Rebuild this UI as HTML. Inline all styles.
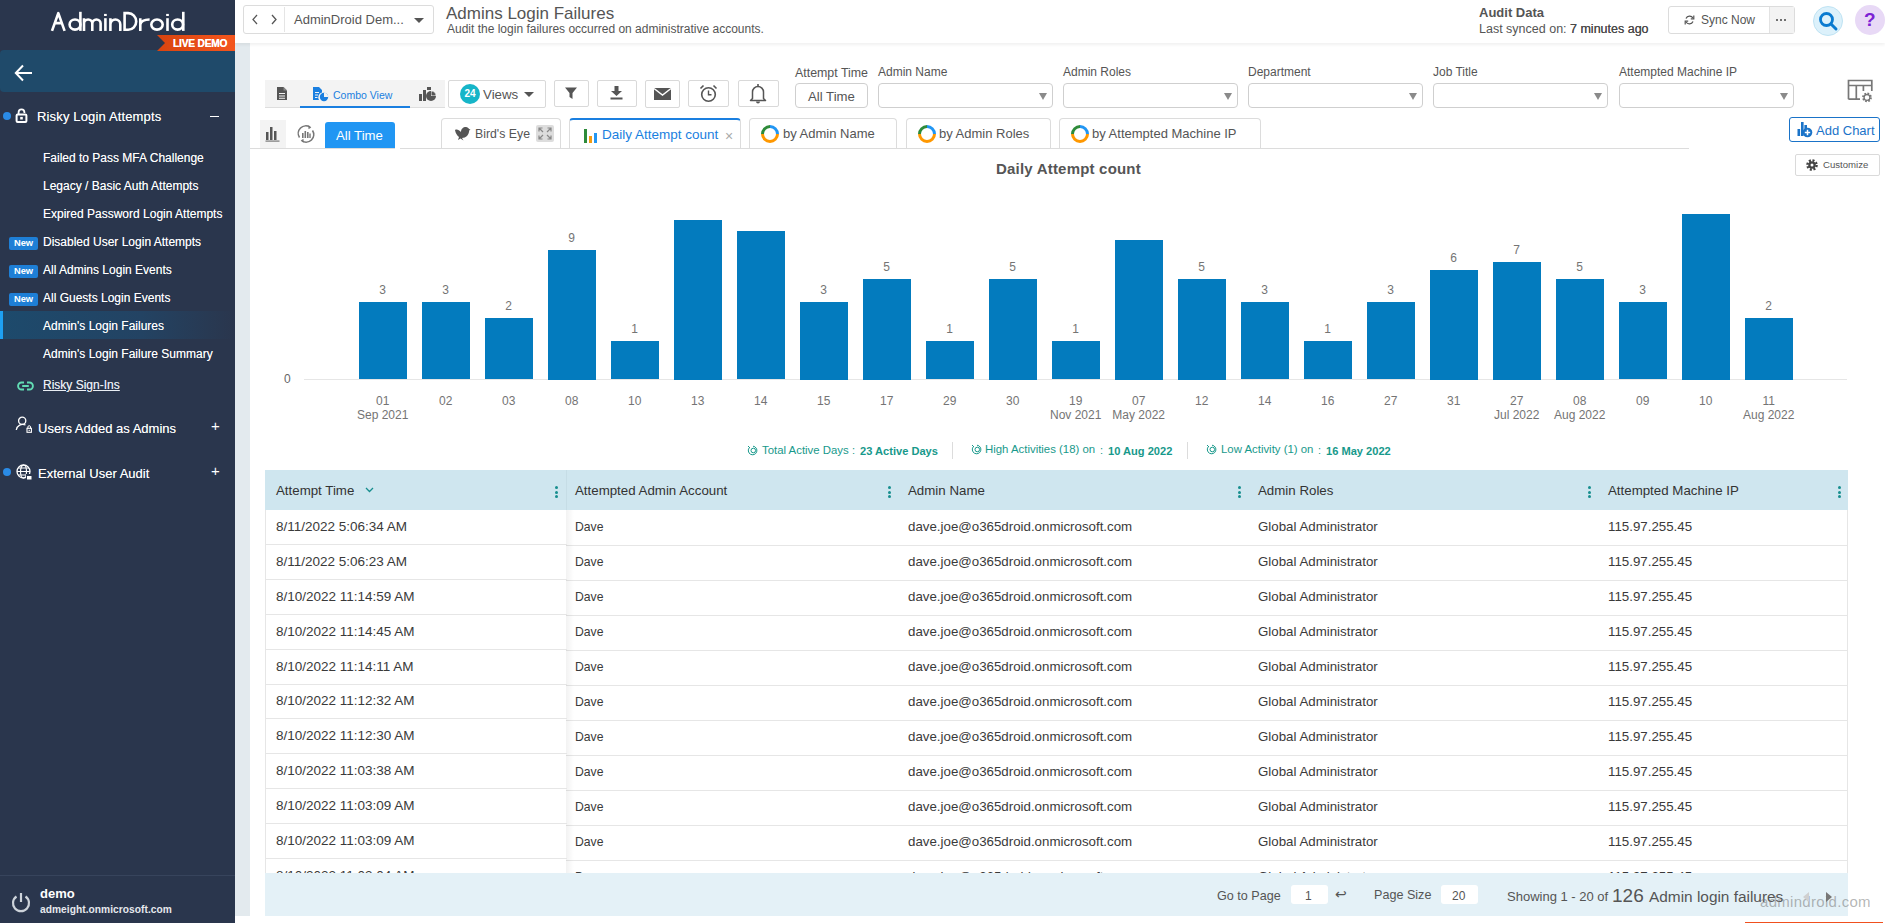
<!DOCTYPE html>
<html><head><meta charset="utf-8">
<style>
*{box-sizing:border-box;margin:0;padding:0}
html,body{width:1885px;height:923px;overflow:hidden;background:#fff;font-family:"Liberation Sans",sans-serif;color:#333}
.a{position:absolute}
.nw{white-space:nowrap}
#sb{left:0;top:0;width:235px;height:923px;background:#2a364d}
.si{position:absolute;left:43px;font-size:12px;color:#fff;white-space:nowrap;margin-top:1px;text-shadow:0 0 0.3px rgba(255,255,255,0.6)}
.new{position:absolute;left:9px;width:29px;height:13px;background:#1e7fd6;border-radius:2px;color:#fff;font-size:9.3px;font-weight:700;text-align:center;line-height:13px}
.hdr{left:235px;top:0;width:1650px;height:43px;background:#fff}
.btn{position:absolute;border:1px solid #d9d9d9;border-radius:2px;background:#fff}
.sel{position:absolute;top:83px;width:175px;height:25px;border:1px solid #cfcfcf;border-radius:4px;background:#fff}
.sel:after{content:"";position:absolute;right:5px;top:9px;border-left:4px solid transparent;border-right:4px solid transparent;border-top:7px solid #8a8a8a}
.lbl{position:absolute;top:65px;font-size:12px;color:#555;white-space:nowrap}
.tab{position:absolute;top:118px;height:30px;border:1px solid #dcdcdc;border-bottom:none;border-radius:4px 4px 0 0;background:#fff;font-size:13px;color:#555;white-space:nowrap}
.bar{position:absolute;background:#037bbe;width:47.5px}
.bv{position:absolute;font-size:12px;color:#747474;width:40px;text-align:center}
.xl{position:absolute;font-size:12px;color:#747474;width:80px;text-align:center;top:394px;line-height:14px}
.th{position:absolute;top:470px;height:40px;background:#cfe6ef}
.tht{position:absolute;top:483px;font-size:13.3px;color:#333;white-space:nowrap}
.kb{position:absolute;top:486px;width:3px;height:13px}
.kb i{position:absolute;left:0;width:3px;height:3px;border-radius:50%;background:#178e8e}
.rl{position:absolute;height:1px;background:#e6e6e6}
.td{position:absolute;font-size:13.3px;color:#3a3a3a;white-space:nowrap}
</style></head><body>

<!-- SIDEBAR -->
<div id="sb" class="a">
  <svg class="a" style="left:0;top:0" width="235" height="40" viewBox="0 0 235 40"><g stroke="#fff" stroke-width="2.6" fill="none">
<path d="M52 30.9 L58.3 13.2 L64.6 30.9 M54.6 23.1 H62" stroke-linejoin="round"/>
<ellipse cx="75" cy="24.55" rx="5.4" ry="5.1"/><path d="M80.4 11.8 V30.9"/>
<path d="M84 30.9 V23.6 A4.15 4.15 0 0 1 92.3 23.6 V30.9 M92.3 23.6 A4.15 4.15 0 0 1 100.6 23.6 V30.9 M84 18.2 V24"/>
<path d="M105.4 18.2 V30.9"/>
<path d="M110.4 30.9 V24.4 A4.95 4.95 0 0 1 120.3 24.4 V30.9 M110.4 18.2 V25"/>
<path d="M124.6 13.1 V29.8 H128.2 A8 8.35 0 0 0 128.2 13.1 Z"/>
<path d="M140.3 18.2 V30.9 M140.3 24.5 Q141.3 19.5 149.6 19.5"/>
<ellipse cx="157" cy="24.55" rx="5.7" ry="5.1"/>
<path d="M167.5 18.2 V30.9"/>
<ellipse cx="177.6" cy="24.55" rx="5.4" ry="5.1"/><path d="M183.3 11.8 V30.9"/>
</g><rect x="104.05" y="13.9" width="2.7" height="2.1" fill="#fff"/><rect x="166.15" y="13.9" width="2.7" height="2.1" fill="#fff"/></svg>
    <div class="a" style="left:0;top:50px;width:235px;height:42px;background:#1f4a6a;border-radius:4px 0 0 4px"></div>
  <div class="a" style="left:157px;top:35px;width:78px;height:16px;background:linear-gradient(90deg,#d9440f,#f4561e);clip-path:polygon(0 0,100% 0,100% 100%,0 100%,8px 50%)"></div>
  <div class="a nw" style="left:173px;top:37.5px;font-size:10.2px;font-weight:700;color:#fff;letter-spacing:-0.2px;text-shadow:0 0 0.4px #fff">LIVE DEMO</div>
  <svg class="a" style="left:14px;top:64px" width="19" height="18" viewBox="0 0 19 18"><path d="M9 1.5 L1.8 9 L9 16.5 M2 9 H18" stroke="#fff" stroke-width="2" fill="none"/></svg>

  <div class="a" style="left:3px;top:112px;width:8px;height:8px;border-radius:50%;background:#2a8be6"></div>
  <svg class="a" style="left:15px;top:108px" width="13" height="15" viewBox="0 0 13 15"><path d="M3.6 6.5 V4.2 A2.9 2.9 0 0 1 9.4 4.2 V5" stroke="#fff" stroke-width="1.8" fill="none"/><rect x="1.6" y="6.6" width="9.8" height="7.4" rx="1" stroke="#fff" stroke-width="2" fill="none"/><rect x="5.2" y="8.9" width="2.6" height="2.6" fill="#fff"/></svg>
  <div class="si" style="left:37px;top:108px;font-size:13px;font-weight:400;letter-spacing:0.15px">Risky Login Attempts</div>
  <div class="a" style="left:210px;top:116px;width:9px;height:1px;background:#fff"></div>

  <div class="si" style="top:150px">Failed to Pass MFA Challenge</div>
  <div class="si" style="top:178px">Legacy / Basic Auth Attempts</div>
  <div class="si" style="top:206px">Expired Password Login Attempts</div>
  <div class="new" style="top:237px">New</div>
  <div class="si" style="top:234px">Disabled User Login Attempts</div>
  <div class="new" style="top:265px">New</div>
  <div class="si" style="top:262px">All Admins Login Events</div>
  <div class="new" style="top:293px">New</div>
  <div class="si" style="top:290px">All Guests Login Events</div>
  <div class="a" style="left:0;top:311px;width:235px;height:28px;background:linear-gradient(90deg,#1d4a6c 0%,#234363 60%,#2a364d 100%)"></div>
  <div class="a" style="left:0;top:311px;width:3px;height:28px;background:#1ea0f2"></div>
  <div class="si" style="top:318px">Admin's Login Failures</div>
  <div class="si" style="top:346px">Admin's Login Failure Summary</div>
  <svg class="a" style="left:17px;top:381px" width="17" height="10" viewBox="0 0 17 10"><g stroke="#62dcb4" stroke-width="1.9" fill="none"><path d="M7 1.5 H4.6 A3.5 3.5 0 0 0 4.6 8.5 H7 M10 1.5 H12.4 A3.5 3.5 0 0 1 12.4 8.5 H10 M5.2 5 H11.8"/></g></svg>
  <div class="si" style="top:377px;text-decoration:underline;color:#e9eef4">Risky Sign-Ins</div>

  <svg class="a" style="left:15px;top:416px" width="18" height="18" viewBox="0 0 18 18"><circle cx="7.2" cy="4.8" r="3.6" stroke="#fff" stroke-width="1.3" fill="none"/><path d="M1.3 14 A6.5 6.5 0 0 1 10.5 9" stroke="#fff" stroke-width="1.3" fill="none"/><rect x="12" y="12.3" width="4.4" height="4" stroke="#fff" stroke-width="1.1" fill="none"/><path d="M12.9 12.3 V11 A1.3 1.3 0 0 1 15.5 11 V12.3" stroke="#fff" stroke-width="1" fill="none"/><rect x="13.6" y="13.8" width="1.2" height="1.2" fill="#fff"/></svg>
  <div class="si" style="left:38px;top:420px;font-size:13px">Users Added as Admins</div>
  <div class="a nw" style="left:211px;top:417px;font-size:15px;color:#fff">+</div>

  <div class="a" style="left:3px;top:468px;width:8px;height:8px;border-radius:50%;background:#2a8be6"></div>
  <svg class="a" style="left:16px;top:464px" width="16" height="16" viewBox="0 0 16 16"><circle cx="7.5" cy="7.5" r="6.5" stroke="#fff" stroke-width="1.3" fill="none"/><ellipse cx="7.5" cy="7.5" rx="3" ry="6.5" stroke="#fff" stroke-width="1.2" fill="none"/><path d="M1 7.5 H14 M2 4 H13 M2 11 H13" stroke="#fff" stroke-width="1.1"/><rect x="10" y="10" width="6" height="6" fill="#2a364d"/><rect x="11" y="12" width="4.5" height="3.5" fill="#fff"/></svg>
  <div class="si" style="left:38px;top:465px;font-size:13px">External User Audit</div>
  <div class="a nw" style="left:211px;top:462px;font-size:15px;color:#fff">+</div>

  <div class="a" style="left:0;top:875px;width:235px;height:1px;background:#37445c"></div>
  <svg class="a" style="left:10px;top:892px" width="22" height="21" viewBox="0 0 22 21"><path d="M6.5 4.5 A8 8 0 1 0 15.5 4.5" stroke="#cdd3da" stroke-width="2.2" fill="none"/><path d="M11 1 V10" stroke="#cdd3da" stroke-width="2.2"/></svg>
  <div class="a nw" style="left:40px;top:886px;font-size:13px;font-weight:700;color:#fff">demo</div>
  <div class="a nw" style="left:40px;top:903.5px;font-size:10.2px;font-weight:700;color:#e6e9ee;letter-spacing:0.05px">admeight.onmicrosoft.com</div>
</div>

<!-- MAIN BG -->
<div class="a" style="left:235px;top:43px;width:15px;height:873px;background:#e3eaee"></div>

<!-- HEADER -->
<div class="a hdr" style="box-shadow:0 2px 3px rgba(0,0,0,0.06)"></div>

<!-- HEADER CONTENT -->
<div class="btn" style="left:243px;top:5px;width:191px;height:29px;border-color:#dcdcdc;border-radius:3px"></div>
<div class="a" style="left:284px;top:7px;width:1px;height:25px;background:#e5e5e5"></div>
<svg class="a" style="left:251px;top:14px" width="8" height="11" viewBox="0 0 8 11"><path d="M6 1 L2 5.5 L6 10" stroke="#555" stroke-width="1.3" fill="none"/></svg>
<svg class="a" style="left:270px;top:14px" width="8" height="11" viewBox="0 0 8 11"><path d="M2 1 L6 5.5 L2 10" stroke="#555" stroke-width="1.3" fill="none"/></svg>
<div class="a nw" style="left:294px;top:12px;font-size:13px;color:#555">AdminDroid Dem...</div>
<div class="a" style="left:414px;top:18px;border-left:5px solid transparent;border-right:5px solid transparent;border-top:5px solid #555"></div>
<div class="a nw" style="left:446px;top:3.5px;font-size:17px;color:#555">Admins Login Failures</div>
<div class="a nw" style="left:447px;top:22px;font-size:12px;color:#555">Audit the login failures occurred on administrative accounts.</div>

<div class="a nw" style="left:1479px;top:5px;font-size:13px;font-weight:700;color:#555">Audit Data</div>
<div class="a nw" style="left:1479px;top:21.5px;font-size:12.5px;color:#555">Last synced on: <span style="color:#4a4a4a;text-shadow:0 0 0.5px #555">7 minutes ago</span></div>
<div class="btn" style="left:1668px;top:6px;width:127px;height:28px;border-color:#dcdcdc;border-radius:3px"></div>
<div class="a" style="left:1769px;top:7px;width:25px;height:26px;background:#f3f3f3;border-left:1px solid #e2e2e2"></div>
<div class="a" style="left:1776px;top:19px;width:2.2px;height:2.2px;background:#444;border-radius:50%;box-shadow:4px 0 0 #444,8px 0 0 #444"></div>
<svg class="a" style="left:1684px;top:14px" width="11" height="12" viewBox="0 0 11 12"><path d="M2 4.5 A4 4 0 0 1 9 4 M9 7.5 A4 4 0 0 1 2 8" stroke="#555" stroke-width="1.3" fill="none"/><path d="M9.8 1.5 V4.8 H6.8" stroke="#555" stroke-width="1.2" fill="none"/><path d="M1.2 10.5 V7.2 H4.2" stroke="#555" stroke-width="1.2" fill="none"/></svg>
<div class="a nw" style="left:1701px;top:13px;font-size:12px;color:#555">Sync Now</div>
<div class="a" style="left:1813px;top:6px;width:30px;height:30px;border-radius:50%;background:#dcf1fb;border:1px solid #bfe3f3"></div>
<svg class="a" style="left:1817px;top:10px" width="22" height="22" viewBox="0 0 22 22"><circle cx="9.5" cy="9.5" r="6" stroke="#0a7bd0" stroke-width="2.8" fill="none"/><path d="M14 14 L19 19" stroke="#0a7bd0" stroke-width="3" stroke-linecap="round"/></svg>
<div class="a" style="left:1855px;top:5px;width:30px;height:30px;border-radius:50%;background:#e8d9f6"></div>
<div class="a nw" style="left:1864px;top:9px;font-size:19px;font-weight:700;color:#7c22d4">?</div>


<!-- TOOLBAR -->
<div class="a" style="left:265px;top:80px;width:180px;height:28px;background:#f3f3f3;border-bottom:1px solid #dedede"></div>
<div class="a" style="left:300px;top:106px;width:110px;height:2px;background:#1a7fe0"></div>
<svg class="a" style="left:276px;top:86px" width="12" height="15" viewBox="0 0 12 15"><path d="M1 1 H7.5 L11 4.5 V14 H1 Z" fill="#555"/><path d="M7.5 1 V4.5 H11" fill="#888"/><path d="M3 7.5 H9 M3 10 H9 M3 12.3 H9" stroke="#f3f3f3" stroke-width="1.1"/></svg>
<svg class="a" style="left:312px;top:86px" width="17" height="16" viewBox="0 0 17 16"><path d="M1 1 H7 L10 4 V6.5 A5 5 0 0 0 7 14 H1 Z" fill="#1a7fe0"/><path d="M3 6.5 H7 M3 9 H6 M3 11.5 H5.5" stroke="#f3f3f3" stroke-width="1"/><circle cx="12" cy="11" r="4.2" fill="#1a7fe0"/><path d="M12 11 V6.8 A4.2 4.2 0 0 1 16.2 11 Z" fill="#f3f3f3"/></svg>
<div class="a nw" style="left:333px;top:89px;font-size:10.5px;color:#1a7fe0">Combo View</div>
<svg class="a" style="left:418px;top:86px" width="19" height="16" viewBox="0 0 19 16"><rect x="1" y="8" width="3" height="7" fill="#555"/><rect x="5" y="4" width="3" height="11" fill="#555"/><circle cx="13" cy="10" r="5" fill="#555"/><path d="M13 10 V5 A5 5 0 0 1 18 10 Z" fill="#f3f3f3"/><path d="M13.5 9.5 V5.5 A4.3 4.3 0 0 1 17.5 9.5 Z" fill="#555"/><rect x="9" y="1" width="4" height="3" fill="#555"/></svg>

<div class="btn" style="left:448px;top:80px;width:98px;height:28px"></div>
<div class="a" style="left:460px;top:84px;width:20px;height:20px;border-radius:50%;background:#16b5c8;color:#fff;font-size:10px;font-weight:700;text-align:center;line-height:20px">24</div>
<div class="a nw" style="left:483px;top:87px;font-size:13.3px;color:#555">Views</div>
<div class="a" style="left:524px;top:92px;border-left:5px solid transparent;border-right:5px solid transparent;border-top:5px solid #555"></div>

<div class="btn" style="left:554px;top:80px;width:35px;height:27px"></div>
<svg class="a" style="left:564px;top:86px" width="14" height="14" viewBox="0 0 14 14"><path d="M1 1.5 H13 L8.5 7 V13 L5.5 11 V7 Z" fill="#555"/></svg>
<div class="btn" style="left:597px;top:80px;width:40px;height:27px"></div>
<svg class="a" style="left:609px;top:85px" width="15" height="15" viewBox="0 0 15 15"><path d="M5.5 1 H9.5 V6 H13 L7.5 11 L2 6 H5.5 Z" fill="#555"/><rect x="1.5" y="12.5" width="12" height="2" fill="#555"/></svg>
<div class="btn" style="left:645px;top:80px;width:35px;height:28px"></div>
<svg class="a" style="left:653px;top:87px" width="19" height="14" viewBox="0 0 19 14"><path d="M1 1 H18 V13 H1 Z" fill="#555"/><path d="M1 1.5 L9.5 8 L18 1.5" stroke="#fff" stroke-width="1.4" fill="none"/></svg>
<div class="btn" style="left:688px;top:80px;width:41px;height:27px"></div>
<svg class="a" style="left:699px;top:84px" width="19" height="19" viewBox="0 0 19 19"><circle cx="9.5" cy="10.5" r="6.8" stroke="#555" stroke-width="1.6" fill="none"/><path d="M9.5 6.5 V10.8 H12.5" stroke="#555" stroke-width="1.4" fill="none"/><path d="M1.5 4.5 L4.5 1.5 M17.5 4.5 L14.5 1.5" stroke="#555" stroke-width="1.6"/></svg>
<div class="btn" style="left:738px;top:80px;width:41px;height:27px"></div>
<svg class="a" style="left:748px;top:83px" width="20" height="21" viewBox="0 0 20 21"><path d="M10 2 A1 1 0 0 1 10 2 M4.5 15.5 V9 A5.5 5.5 0 0 1 15.5 9 V15.5 L17.5 17.5 H2.5 Z" stroke="#555" stroke-width="1.5" fill="none" stroke-linejoin="round"/><path d="M10 1 V3" stroke="#555" stroke-width="1.6"/><path d="M8 18.5 A2 2 0 0 0 12 18.5" fill="#555"/></svg>

<!-- FILTERS -->
<div class="lbl" style="left:795px;top:66px;font-size:12.4px">Attempt Time</div>
<div class="a" style="left:795px;top:83px;width:73px;height:25px;border:1px solid #cfcfcf;border-radius:4px;background:#fff"></div>
<div class="a nw" style="left:808px;top:89px;font-size:13.2px;color:#555">All Time</div>
<div class="lbl" style="left:878px">Admin Name</div><div class="sel" style="left:878px"></div>
<div class="lbl" style="left:1063px">Admin Roles</div><div class="sel" style="left:1063px"></div>
<div class="lbl" style="left:1248px">Department</div><div class="sel" style="left:1248px"></div>
<div class="lbl" style="left:1433px">Job Title</div><div class="sel" style="left:1433px"></div>
<div class="lbl" style="left:1619px">Attempted Machine IP</div><div class="sel" style="left:1619px"></div>
<svg class="a" style="left:1846px;top:78px" width="30" height="28" viewBox="0 0 30 28"><g stroke="#777" stroke-width="1.7" fill="none"><path d="M2.5 21.2 V2.5 H25.8 V13 M2.5 7.5 H25.8 M10.3 7.5 V21.2 M17.4 7.5 V13 M2.5 21.2 H14"/></g><circle cx="21" cy="19.4" r="6" fill="#fff"/><circle cx="21" cy="19.4" r="3.7" stroke="#777" stroke-width="2.4" fill="none" stroke-dasharray="1.6 1.3"/><circle cx="21" cy="19.4" r="2.9" stroke="#777" stroke-width="1.3" fill="none"/></svg>

<!-- TABS ROW -->
<div class="a" style="left:260px;top:120px;width:26px;height:28px;background:#f3f3f3"></div>
<svg class="a" style="left:265px;top:125px" width="15" height="17" viewBox="0 0 15 17"><rect x="1" y="7" width="2.5" height="8" fill="#555"/><rect x="5" y="2" width="2.5" height="13" fill="#555"/><rect x="9" y="6" width="2.5" height="9" fill="#555"/><rect x="0.5" y="15.5" width="14" height="1.2" fill="#777"/></svg>
<svg class="a" style="left:296px;top:124px" width="20" height="20" viewBox="0 0 20 20"><path d="M3.5 13.5 A7.5 7.5 0 0 1 14 3.2 M16.5 6.5 A7.5 7.5 0 0 1 6 16.8" stroke="#777" stroke-width="1.6" fill="none"/><path d="M12.5 1.2 L15.3 3.4 L12.5 5.2 Z M7.5 18.8 L4.7 16.6 L7.5 14.8 Z" fill="#777"/><rect x="6" y="9" width="1.6" height="5" fill="#777"/><rect x="8.5" y="7" width="1.6" height="7" fill="#777"/><rect x="11" y="8" width="1.6" height="6" fill="#777"/><rect x="13.3" y="9.5" width="1.4" height="4.5" fill="#777"/></svg>
<div class="a" style="left:325px;top:122px;width:70px;height:26px;background:#2196f3;border-radius:3px 3px 0 0"></div>
<div class="a nw" style="left:336px;top:128px;font-size:13.2px;color:#fff">All Time</div>
<div class="a" style="left:250px;top:148px;width:1439px;height:1px;background:#dcdcdc"></div>
<div class="a" style="left:395px;top:148px;width:5px;height:1px;background:#fff"></div>

<div class="tab" style="left:441px;width:120px"></div>
<svg class="a" style="left:454px;top:126px" width="17" height="15" viewBox="0 0 17 15"><path d="M1 4 C3 3 5 4 7 6 C7 3 9 1 12 1 C13.5 1 14.5 2 15 3 L16.5 3.5 L15.2 4.5 C15 9 12 12 8 12 L9.5 14.5 L6.5 12.5 L4 14 L5 11 C3 9.5 1.5 7 1 4 Z" fill="#555"/></svg>
<div class="a nw" style="left:475px;top:127px;font-size:12.3px;color:#555">Bird's Eye</div>
<div class="a" style="left:536px;top:125px;width:18px;height:17px;background:#ddd;border-radius:2px"></div>
<svg class="a" style="left:538px;top:127px" width="14" height="13" viewBox="0 0 14 13"><path d="M1 4.5 V1 H4.5 M9.5 1 H13 V4.5 M13 8.5 V12 H9.5 M4.5 12 H1 V8.5 M1.5 1.5 L5 5 M12.5 1.5 L9 5 M12.5 11.5 L9 8 M1.5 11.5 L5 8" stroke="#888" stroke-width="1.2" fill="none"/></svg>

<div class="tab" style="left:569px;width:172px;height:30px;top:118px;border-top:2px solid #1a7fe0"></div>
<svg class="a" style="left:584px;top:129px" width="13" height="14" viewBox="0 0 13 14"><rect x="0" y="0" width="3" height="14" fill="#2e8b3a"/><rect x="5" y="7" width="3" height="7" fill="#f39c12"/><rect x="10" y="4" width="3" height="10" fill="#2196f3"/></svg>
<div class="a nw" style="left:602px;top:127px;font-size:13.5px;color:#1a7fe0">Daily Attempt count</div>
<div class="a nw" style="left:725px;top:128px;font-size:14px;color:#aaa">×</div>

<div class="tab" style="left:749px;width:148px"></div>
<div class="tab" style="left:906px;width:145px"></div>
<div class="tab" style="left:1059px;width:202px"></div>
<svg class="a" style="left:761px;top:125px" width="18" height="18" viewBox="0 0 18 18"><path d="M9 1.5 A7.5 7.5 0 0 1 16.5 9" stroke="#2196f3" stroke-width="3" fill="none"/><path d="M16.5 9 A7.5 7.5 0 0 1 1.5 9" stroke="#ff9800" stroke-width="3" fill="none"/><path d="M1.5 9 A7.5 7.5 0 0 1 9 1.5" stroke="#2e8b3a" stroke-width="3" fill="none"/></svg><div class="a nw" style="left:783px;top:126px;font-size:13px;color:#555">by Admin Name</div>
<svg class="a" style="left:918px;top:125px" width="18" height="18" viewBox="0 0 18 18"><path d="M9 1.5 A7.5 7.5 0 0 1 16.5 9" stroke="#2196f3" stroke-width="3" fill="none"/><path d="M16.5 9 A7.5 7.5 0 0 1 1.5 9" stroke="#ff9800" stroke-width="3" fill="none"/><path d="M1.5 9 A7.5 7.5 0 0 1 9 1.5" stroke="#2e8b3a" stroke-width="3" fill="none"/></svg><div class="a nw" style="left:939px;top:126px;font-size:13px;color:#555">by Admin Roles</div>
<svg class="a" style="left:1071px;top:125px" width="18" height="18" viewBox="0 0 18 18"><path d="M9 1.5 A7.5 7.5 0 0 1 16.5 9" stroke="#2196f3" stroke-width="3" fill="none"/><path d="M16.5 9 A7.5 7.5 0 0 1 1.5 9" stroke="#ff9800" stroke-width="3" fill="none"/><path d="M1.5 9 A7.5 7.5 0 0 1 9 1.5" stroke="#2e8b3a" stroke-width="3" fill="none"/></svg><div class="a nw" style="left:1092px;top:126px;font-size:13px;color:#555">by Attempted Machine IP</div>

<div class="a" style="left:1789px;top:117px;width:91px;height:25px;border:1px solid #1a73c8;border-radius:3px;background:#fff"></div>
<svg class="a" style="left:1796px;top:121px" width="17" height="17" viewBox="0 0 17 17"><rect x="1.5" y="8" width="2.6" height="7" fill="#1a73c8"/><rect x="5" y="1" width="2.6" height="14" fill="#1a73c8"/><rect x="8.4" y="4" width="2.6" height="6" fill="#1a73c8"/><circle cx="11.5" cy="11.5" r="4.8" fill="#1a73c8"/><path d="M11.5 8.8 V14.2 M8.8 11.5 H14.2" stroke="#fff" stroke-width="1.5"/></svg>
<div class="a nw" style="left:1816px;top:123px;font-size:13px;color:#1a73c8">Add Chart</div>
<div class="a" style="left:1795px;top:154px;width:85px;height:22px;border:1px solid #dadada;border-radius:2px;background:#fff"></div>
<svg class="a" style="left:1806px;top:159px" width="12" height="12" viewBox="0 0 12 12"><circle cx="6" cy="6" r="4.6" stroke="#444" stroke-width="2.4" fill="none" stroke-dasharray="2 1.6"/><circle cx="6" cy="6" r="3.8" fill="#444"/><circle cx="6" cy="6" r="1.5" fill="#fff"/></svg>
<div class="a nw" style="left:1823px;top:159px;font-size:9.6px;color:#555">Customize</div>


<!-- CHART -->
<div class="a nw" style="left:996px;top:160px;font-size:15px;font-weight:700;color:#555;letter-spacing:0.2px">Daily Attempt count</div>
<div class="a" style="left:304px;top:379px;width:1543px;height:1px;background:#e6e6e6"></div>
<div class="a nw" style="left:284px;top:372px;font-size:12px;color:#666">0</div>
<div class="bar" style="left:359.2px;top:301.7px;height:77.8px"></div><div class="bv" style="left:362.7px;top:282.7px">3</div><div class="xl" style="left:342.7px">01<br>Sep 2021</div>
<div class="bar" style="left:422.2px;top:301.7px;height:77.8px"></div><div class="bv" style="left:425.7px;top:282.7px">3</div><div class="xl" style="left:405.7px">02</div>
<div class="bar" style="left:485.2px;top:317.7px;height:61.8px"></div><div class="bv" style="left:488.7px;top:298.7px">2</div><div class="xl" style="left:468.7px">03</div>
<div class="bar" style="left:548.2px;top:250px;height:129.5px"></div><div class="bv" style="left:551.7px;top:231.0px">9</div><div class="xl" style="left:531.7px">08</div>
<div class="bar" style="left:611.2px;top:340.6px;height:38.9px"></div><div class="bv" style="left:614.7px;top:321.6px">1</div><div class="xl" style="left:594.7px">10</div>
<div class="bar" style="left:674.2px;top:220px;height:159.5px"></div><div class="xl" style="left:657.7px">13</div>
<div class="bar" style="left:737.2px;top:231.1px;height:148.4px"></div><div class="xl" style="left:720.7px">14</div>
<div class="bar" style="left:800.2px;top:301.5px;height:78.0px"></div><div class="bv" style="left:803.7px;top:282.5px">3</div><div class="xl" style="left:783.7px">15</div>
<div class="bar" style="left:863.2px;top:279px;height:100.5px"></div><div class="bv" style="left:866.7px;top:260.0px">5</div><div class="xl" style="left:846.7px">17</div>
<div class="bar" style="left:926.2px;top:340.6px;height:38.9px"></div><div class="bv" style="left:929.7px;top:321.6px">1</div><div class="xl" style="left:909.7px">29</div>
<div class="bar" style="left:989.2px;top:279px;height:100.5px"></div><div class="bv" style="left:992.7px;top:260.0px">5</div><div class="xl" style="left:972.7px">30</div>
<div class="bar" style="left:1052.2px;top:340.6px;height:38.9px"></div><div class="bv" style="left:1055.7px;top:321.6px">1</div><div class="xl" style="left:1035.7px">19<br>Nov 2021</div>
<div class="bar" style="left:1115.2px;top:240px;height:139.5px"></div><div class="xl" style="left:1098.7px">07<br>May 2022</div>
<div class="bar" style="left:1178.2px;top:279px;height:100.5px"></div><div class="bv" style="left:1181.7px;top:260.0px">5</div><div class="xl" style="left:1161.7px">12</div>
<div class="bar" style="left:1241.2px;top:301.7px;height:77.8px"></div><div class="bv" style="left:1244.7px;top:282.7px">3</div><div class="xl" style="left:1224.7px">14</div>
<div class="bar" style="left:1304.2px;top:340.6px;height:38.9px"></div><div class="bv" style="left:1307.7px;top:321.6px">1</div><div class="xl" style="left:1287.7px">16</div>
<div class="bar" style="left:1367.2px;top:301.7px;height:77.8px"></div><div class="bv" style="left:1370.7px;top:282.7px">3</div><div class="xl" style="left:1350.7px">27</div>
<div class="bar" style="left:1430.2px;top:270px;height:109.5px"></div><div class="bv" style="left:1433.7px;top:251.0px">6</div><div class="xl" style="left:1413.7px">31</div>
<div class="bar" style="left:1493.2px;top:262px;height:117.5px"></div><div class="bv" style="left:1496.7px;top:243.0px">7</div><div class="xl" style="left:1476.7px">27<br>Jul 2022</div>
<div class="bar" style="left:1556.2px;top:279px;height:100.5px"></div><div class="bv" style="left:1559.7px;top:260.0px">5</div><div class="xl" style="left:1539.7px">08<br>Aug 2022</div>
<div class="bar" style="left:1619.2px;top:301.7px;height:77.8px"></div><div class="bv" style="left:1622.7px;top:282.7px">3</div><div class="xl" style="left:1602.7px">09</div>
<div class="bar" style="left:1682.2px;top:214px;height:165.5px"></div><div class="xl" style="left:1665.7px">10</div>
<div class="bar" style="left:1745.2px;top:318px;height:61.5px"></div><div class="bv" style="left:1748.7px;top:299.0px">2</div><div class="xl" style="left:1728.7px">11<br>Aug 2022</div>

<svg class="a" style="left:747px;top:445px" width="12" height="11" viewBox="0 0 12 11"><path d="M2.5 2.5 A4.3 4.3 0 1 0 6 1.2" stroke="#17998b" stroke-width="1" fill="none"/><circle cx="6.3" cy="5.5" r="2.3" stroke="#17998b" stroke-width="1" fill="none"/><path d="M1 1 L3 3" stroke="#17998b" stroke-width="1"/></svg>
<div class="a nw" style="left:762px;top:444px;font-size:11.4px;color:#17998b">Total Active Days</div>
<div class="a nw" style="left:852px;top:444px;font-size:11px;color:#17998b">:</div>
<div class="a nw" style="left:860px;top:445px;font-size:11.1px;font-weight:700;color:#17998b">23 Active Days</div>
<div class="a" style="left:952px;top:442px;width:1px;height:17px;background:#dcdcdc"></div>
<svg class="a" style="left:971px;top:444px" width="12" height="11" viewBox="0 0 12 11"><path d="M2.5 2.5 A4.3 4.3 0 1 0 6 1.2" stroke="#17998b" stroke-width="1" fill="none"/><circle cx="6.3" cy="5.5" r="2.3" stroke="#17998b" stroke-width="1" fill="none"/><path d="M1 1 L3 3" stroke="#17998b" stroke-width="1"/></svg>
<div class="a nw" style="left:985px;top:443px;font-size:11.4px;color:#17998b">High Activities (18) on</div>
<div class="a nw" style="left:1100px;top:444px;font-size:11px;color:#17998b">:</div>
<div class="a nw" style="left:1108px;top:445px;font-size:11.1px;font-weight:700;color:#17998b">10 Aug 2022</div>
<div class="a" style="left:1187px;top:442px;width:1px;height:17px;background:#dcdcdc"></div>
<svg class="a" style="left:1206px;top:444px" width="12" height="11" viewBox="0 0 12 11"><path d="M2.5 2.5 A4.3 4.3 0 1 0 6 1.2" stroke="#17998b" stroke-width="1" fill="none"/><circle cx="6.3" cy="5.5" r="2.3" stroke="#17998b" stroke-width="1" fill="none"/><path d="M1 1 L3 3" stroke="#17998b" stroke-width="1"/></svg>
<div class="a nw" style="left:1221px;top:443px;font-size:11.4px;color:#17998b">Low Activity (1) on</div>
<div class="a nw" style="left:1318px;top:444px;font-size:11px;color:#17998b">:</div>
<div class="a nw" style="left:1326px;top:445px;font-size:11.1px;font-weight:700;color:#17998b">16 May 2022</div>


<!-- TABLE -->
<div class="th" style="left:265px;width:1583px"></div>
<div class="a" style="left:566px;top:470px;width:1px;height:40px;background:#c6dde6"></div>
<div class="tht" style="left:276px">Attempt Time</div><div class="kb" style="left:555px"><i style="top:0"></i><i style="top:4.5px"></i><i style="top:9px"></i></div>
<div class="tht" style="left:575px">Attempted Admin Account</div><div class="kb" style="left:888px"><i style="top:0"></i><i style="top:4.5px"></i><i style="top:9px"></i></div>
<div class="tht" style="left:908px">Admin Name</div><div class="kb" style="left:1238px"><i style="top:0"></i><i style="top:4.5px"></i><i style="top:9px"></i></div>
<div class="tht" style="left:1258px">Admin Roles</div><div class="kb" style="left:1588px"><i style="top:0"></i><i style="top:4.5px"></i><i style="top:9px"></i></div>
<div class="tht" style="left:1608px">Attempted Machine IP</div><div class="kb" style="left:1838px"><i style="top:0"></i><i style="top:4.5px"></i><i style="top:9px"></i></div>
<svg class="a" style="left:365px;top:487px" width="9" height="6" viewBox="0 0 9 6"><path d="M1 1 L4.5 4.5 L8 1" stroke="#178e8e" stroke-width="1.3" fill="none"/></svg>
<div class="a" style="left:265px;top:510px;width:1583px;height:363px;overflow:hidden"><div class="rl" style="left:301px;top:35px;width:1282px"></div><div class="td" style="left:310px;top:10.3px;font-size:12.2px">Dave</div><div class="td" style="left:643px;top:9px">dave.joe@o365droid.onmicrosoft.com</div><div class="td" style="left:993px;top:9px">Global Administrator</div><div class="td" style="left:1343px;top:9px">115.97.255.45</div>
<div class="rl" style="left:301px;top:70px;width:1282px"></div><div class="td" style="left:310px;top:45.3px;font-size:12.2px">Dave</div><div class="td" style="left:643px;top:44px">dave.joe@o365droid.onmicrosoft.com</div><div class="td" style="left:993px;top:44px">Global Administrator</div><div class="td" style="left:1343px;top:44px">115.97.255.45</div>
<div class="rl" style="left:301px;top:105px;width:1282px"></div><div class="td" style="left:310px;top:80.3px;font-size:12.2px">Dave</div><div class="td" style="left:643px;top:79px">dave.joe@o365droid.onmicrosoft.com</div><div class="td" style="left:993px;top:79px">Global Administrator</div><div class="td" style="left:1343px;top:79px">115.97.255.45</div>
<div class="rl" style="left:301px;top:140px;width:1282px"></div><div class="td" style="left:310px;top:115.3px;font-size:12.2px">Dave</div><div class="td" style="left:643px;top:114px">dave.joe@o365droid.onmicrosoft.com</div><div class="td" style="left:993px;top:114px">Global Administrator</div><div class="td" style="left:1343px;top:114px">115.97.255.45</div>
<div class="rl" style="left:301px;top:175px;width:1282px"></div><div class="td" style="left:310px;top:150.3px;font-size:12.2px">Dave</div><div class="td" style="left:643px;top:149px">dave.joe@o365droid.onmicrosoft.com</div><div class="td" style="left:993px;top:149px">Global Administrator</div><div class="td" style="left:1343px;top:149px">115.97.255.45</div>
<div class="rl" style="left:301px;top:210px;width:1282px"></div><div class="td" style="left:310px;top:185.3px;font-size:12.2px">Dave</div><div class="td" style="left:643px;top:184px">dave.joe@o365droid.onmicrosoft.com</div><div class="td" style="left:993px;top:184px">Global Administrator</div><div class="td" style="left:1343px;top:184px">115.97.255.45</div>
<div class="rl" style="left:301px;top:245px;width:1282px"></div><div class="td" style="left:310px;top:220.3px;font-size:12.2px">Dave</div><div class="td" style="left:643px;top:219px">dave.joe@o365droid.onmicrosoft.com</div><div class="td" style="left:993px;top:219px">Global Administrator</div><div class="td" style="left:1343px;top:219px">115.97.255.45</div>
<div class="rl" style="left:301px;top:280px;width:1282px"></div><div class="td" style="left:310px;top:255.3px;font-size:12.2px">Dave</div><div class="td" style="left:643px;top:254px">dave.joe@o365droid.onmicrosoft.com</div><div class="td" style="left:993px;top:254px">Global Administrator</div><div class="td" style="left:1343px;top:254px">115.97.255.45</div>
<div class="rl" style="left:301px;top:315px;width:1282px"></div><div class="td" style="left:310px;top:290.3px;font-size:12.2px">Dave</div><div class="td" style="left:643px;top:289px">dave.joe@o365droid.onmicrosoft.com</div><div class="td" style="left:993px;top:289px">Global Administrator</div><div class="td" style="left:1343px;top:289px">115.97.255.45</div>
<div class="rl" style="left:301px;top:350px;width:1282px"></div><div class="td" style="left:310px;top:325.3px;font-size:12.2px">Dave</div><div class="td" style="left:643px;top:324px">dave.joe@o365droid.onmicrosoft.com</div><div class="td" style="left:993px;top:324px">Global Administrator</div><div class="td" style="left:1343px;top:324px">115.97.255.45</div>
<div class="rl" style="left:301px;top:385px;width:1282px"></div><div class="td" style="left:310px;top:360.3px;font-size:12.2px">Dave</div><div class="td" style="left:643px;top:359px">dave.joe@o365droid.onmicrosoft.com</div><div class="td" style="left:993px;top:359px">Global Administrator</div><div class="td" style="left:1343px;top:359px">115.97.255.45</div>
<div class="a" style="left:301px;top:0;width:8px;height:363px;background:linear-gradient(90deg,rgba(0,0,0,0.05),rgba(0,0,0,0))"></div><div class="a" style="left:0;top:0;width:301px;height:363px;background:#fff;border-left:1px solid #e6e6e6"><div class="rl" style="left:0;top:34.0px;width:301px"></div><div class="td" style="left:10px;top:9.0px;font-size:13.5px">8/11/2022 5:06:34 AM</div><div class="rl" style="left:0;top:68.9px;width:301px"></div><div class="td" style="left:10px;top:43.9px;font-size:13.5px">8/11/2022 5:06:23 AM</div><div class="rl" style="left:0;top:103.7px;width:301px"></div><div class="td" style="left:10px;top:78.7px;font-size:13.5px">8/10/2022 11:14:59 AM</div><div class="rl" style="left:0;top:138.6px;width:301px"></div><div class="td" style="left:10px;top:113.6px;font-size:13.5px">8/10/2022 11:14:45 AM</div><div class="rl" style="left:0;top:173.5px;width:301px"></div><div class="td" style="left:10px;top:148.5px;font-size:13.5px">8/10/2022 11:14:11 AM</div><div class="rl" style="left:0;top:208.3px;width:301px"></div><div class="td" style="left:10px;top:183.3px;font-size:13.5px">8/10/2022 11:12:32 AM</div><div class="rl" style="left:0;top:243.2px;width:301px"></div><div class="td" style="left:10px;top:218.2px;font-size:13.5px">8/10/2022 11:12:30 AM</div><div class="rl" style="left:0;top:278.1px;width:301px"></div><div class="td" style="left:10px;top:253.1px;font-size:13.5px">8/10/2022 11:03:38 AM</div><div class="rl" style="left:0;top:313.0px;width:301px"></div><div class="td" style="left:10px;top:288.0px;font-size:13.5px">8/10/2022 11:03:09 AM</div><div class="rl" style="left:0;top:347.8px;width:301px"></div><div class="td" style="left:10px;top:322.8px;font-size:13.5px">8/10/2022 11:03:09 AM</div><div class="rl" style="left:0;top:382.7px;width:301px"></div><div class="td" style="left:10px;top:357.7px;font-size:13.5px">8/10/2022 11:03:04 AM</div></div><div class="a" style="left:1582px;top:0;width:1px;height:363px;background:#e6e6e6"></div></div>

<!-- FOOTER -->
<div class="a" style="left:265px;top:873px;width:1583px;height:43px;background:#e4f1f7"></div>
<div class="a nw" style="left:1217px;top:889px;font-size:12.6px;color:#555">Go to Page</div>
<div class="a" style="left:1291px;top:885px;width:37px;height:19px;background:#fff;border-radius:3px"></div>
<div class="a nw" style="left:1305px;top:889px;font-size:12px;color:#555">1</div>
<div class="a nw" style="left:1335px;top:886px;font-size:14px;color:#555">&#8617;</div>
<div class="a nw" style="left:1374px;top:888px;font-size:12.6px;color:#555">Page Size</div>
<div class="a" style="left:1441px;top:885px;width:37px;height:19px;background:#fff;border-radius:3px"></div>
<div class="a nw" style="left:1452px;top:889px;font-size:12px;color:#555">20</div>
<div class="a nw" style="left:1507px;top:889px;font-size:13px;color:#555">Showing 1 - 20 of</div>
<div class="a nw" style="left:1612px;top:884.5px;font-size:19px;color:#555">126</div>
<div class="a nw" style="left:1649px;top:888px;font-size:15.4px;color:#555">Admin login failures</div>
<div class="a nw" style="left:1760px;top:893px;font-size:15px;color:rgba(120,120,120,0.55);letter-spacing:0.3px">admindroid.com</div>
<div class="a" style="left:1803px;top:892px;border-top:5px solid transparent;border-bottom:5px solid transparent;border-right:6px solid #d0d0d0"></div>
<div class="a" style="left:1826px;top:892px;border-top:5px solid transparent;border-bottom:5px solid transparent;border-left:6px solid #777"></div>
<div class="a" style="left:1745px;top:921.5px;width:138px;height:2px;background:#f0501e"></div>

</body></html>
